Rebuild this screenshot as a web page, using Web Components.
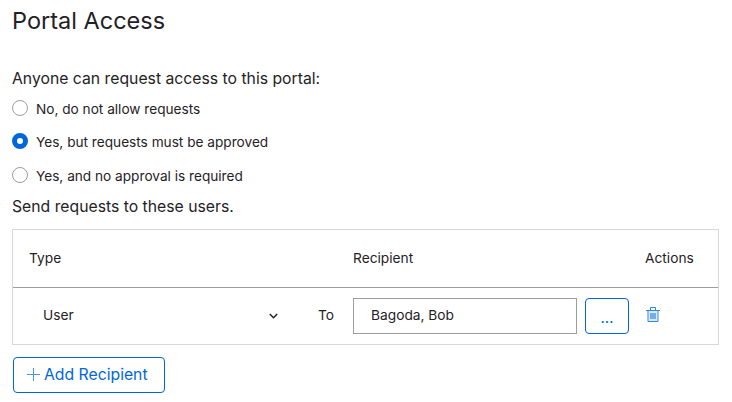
<!DOCTYPE html>
<html>
<head>
<meta charset="utf-8">
<title>Portal Access</title>
<style>
    html, body { margin: 0; background: #fff; }
    body { font-family: Inter, Roboto, "Liberation Sans", sans-serif; color: #1f2226; overflow: hidden; }
</style>
</head>
<body>
<portal-access></portal-access>
<script>
// Radio row with label
class PaRadio extends HTMLElement {
    constructor() {
        super();
        this.attachShadow({ mode: 'open' });
    }
    connectedCallback() {
        this.shadowRoot.innerHTML = `
            <style>
                :host { display: flex; align-items: center; gap: 8px; height: 33.4px; font-size: 13.65px; }
                .dot { width: 16px; height: 16px; border-radius: 50%; border: 1px solid #9a9da1; box-sizing: border-box; background: #fff; }
                :host([checked]) .dot { border: 5px solid #0067db; }
                .label { padding-top: 2px; }
            </style>
            <span class="dot"></span><span class="label"><slot></slot></span>
        `;
    }
}

class PaButton extends HTMLElement {
    constructor() {
        super();
        this.attachShadow({ mode: 'open' });
    }
    connectedCallback() {
        this.shadowRoot.innerHTML = `
            <style>
                :host {
                    display: inline-flex; align-items: center; justify-content: center; gap: 4px;
                    box-sizing: border-box; border: 1px solid #0067db; border-radius: 4px;
                    color: #0067db; background: #fff; font-size: 15.75px; cursor: pointer;
                }
            </style>
            <slot></slot>
        `;
    }
}

class PortalAccess extends HTMLElement {
    constructor() {
        super();
        this.attachShadow({ mode: 'open' });
    }
    connectedCallback() {
        this.shadowRoot.innerHTML = `
            <style>
                :host { display: block; padding: 0 13px 0 12px; height: 402px; box-sizing: border-box; }
                h1 { margin: 0; padding-top: 6px; height: 69px; box-sizing: border-box; font-size: 23.5px; font-weight: 400; line-height: 30px; }
                .lead { font-size: 15.75px; line-height: 20px; height: 22.4px; }
                .radios { display: block; }
                .send { font-size: 15.75px; line-height: 20px; height: 32px; margin-top: 5.4px; }
                .table { border: 1px solid #d5d7da; font-size: 13.75px; }
                .head, .row { display: grid; grid-template-columns: 284px 56px 232px 60px 1fr; align-items: center; }
                .head { height: 58px; box-sizing: border-box; border-bottom: 1px solid #9a9da1; }
                .head > :first-child { padding-left: 16px; }
                .row { height: 56px; }
                .user { display: flex; justify-content: space-between; align-items: center; padding: 0 19px 0 30px; }
                .user span { margin-top: -1px; }
                .to { padding: 0 0 2px 21px; }
                .box { box-sizing: border-box; width: 224px; height: 36px; border: 1px solid #9a9da1; display: flex; align-items: center; padding: 0 0 2px 17px; }
                .more { width: 44px; height: 36px; font-size: 15px; padding-top: 3px; }
                .trash { display: flex; padding-left: 1px; margin-top: -2px; }
                pa-button.add { width: 152px; height: 36px; margin: 12px 0 0 1px; justify-content: flex-start; padding-left: 13px; }
            </style>
            <h1>Portal Access</h1>
            <div class="lead">Anyone can request access to this portal:</div>
            <div class="radios">
                <pa-radio>No, do not allow requests</pa-radio>
                <pa-radio checked>Yes, but requests must be approved</pa-radio>
                <pa-radio>Yes, and no approval is required</pa-radio>
            </div>
            <div class="send">Send requests to these users.</div>
            <div class="table">
                <div class="head">
                    <span>Type</span><span></span><span>Recipient</span><span></span><span>Actions</span>
                </div>
                <div class="row">
                    <div class="user"><span>User</span>
                        <svg width="9" height="6" viewBox="0 0 9 6" fill="none" stroke="#1f2226" stroke-width="1.5"><path d="M.8 1l3.700 3.700L8.200 1"/></svg>
                    </div>
                    <span class="to">To</span>
                    <div class="box">Bagoda, Bob</div>
                    <pa-button class="more">...</pa-button>
                    <div class="trash">
                        <svg width="14" height="15" viewBox="0 0 14 15" fill="none" stroke="#2f86dd" stroke-width="1"><path d="M2.500 4h9v10h-9z" fill="#8fc4f5" fill-opacity=".35" stroke="none"/><path d="M0 3.500h14M2 3.500v11h10v-11M4.500 3.500V.5h5v3"/><path d="M5 6v6M7 6v6M9 6v6" stroke-width="1.200"/></svg>
                    </div>
                </div>
            </div>
            <pa-button class="add">
                <svg width="13" height="13" viewBox="0 0 13 13" stroke="#4a94e6" stroke-width="1"><path d="M6.500 0v13M0 6.500h13"/></svg>
                Add Recipient
            </pa-button>
        `;
    }
}

customElements.define('pa-radio', PaRadio);
customElements.define('pa-button', PaButton);
customElements.define('portal-access', PortalAccess);
</script>
</body>
</html>
